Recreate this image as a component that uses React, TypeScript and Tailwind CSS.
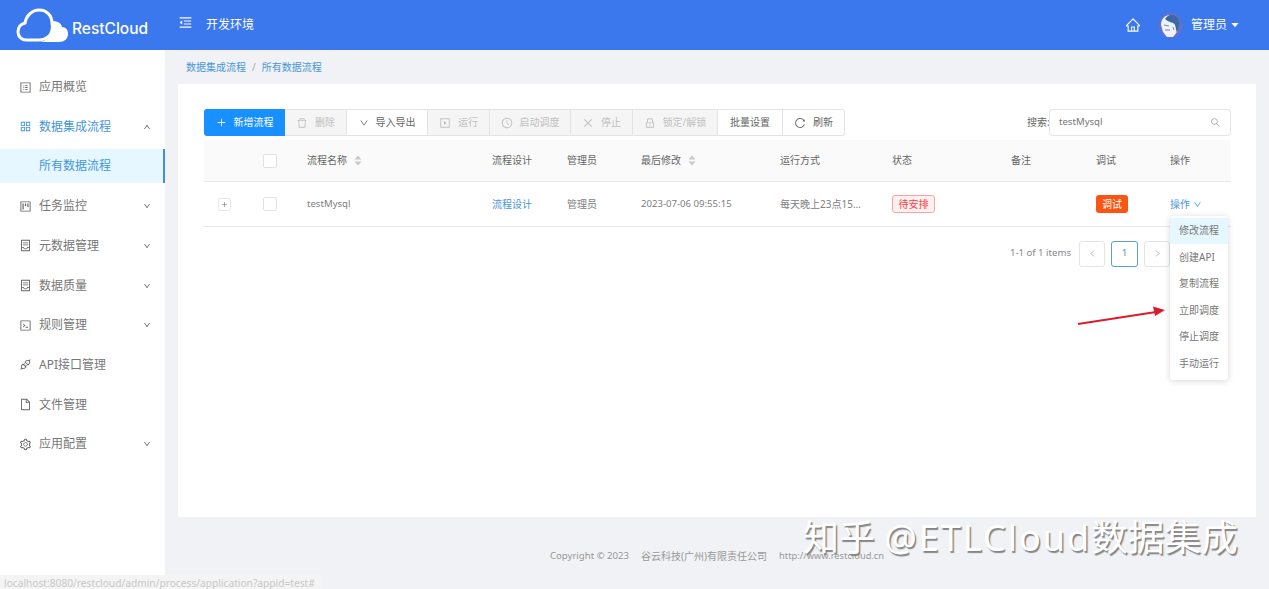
import type { ReactNode } from "react";
import {
  AiOutlineApi,
  AiOutlineAppstore,
  AiOutlineCaretDown,
  AiOutlineClockCircle,
  AiOutlineClose,
  AiOutlineCode,
  AiOutlineContainer,
  AiOutlineDelete,
  AiOutlineDown,
  AiOutlineFile,
  AiOutlineHome,
  AiOutlineLeft,
  AiOutlineLock,
  AiOutlineMenuFold,
  AiOutlinePlaySquare,
  AiOutlinePlus,
  AiOutlineProfile,
  AiOutlineProject,
  AiOutlineReload,
  AiOutlineRight,
  AiOutlineSearch,
  AiOutlineSetting,
  AiOutlineUp,
} from "react-icons/ai";

const menu = [
  { label: "任务监控", icon: <AiOutlineProject />, more: true },
  { label: "元数据管理", icon: <AiOutlineContainer />, more: true },
  { label: "数据质量", icon: <AiOutlineContainer />, more: true },
  { label: "规则管理", icon: <AiOutlineCode />, more: true },
  { label: "API接口管理", icon: <AiOutlineApi />, more: false },
  { label: "文件管理", icon: <AiOutlineFile />, more: false },
  { label: "应用配置", icon: <AiOutlineSetting />, more: true },
];

const dropdownItems = ["修改流程", "创建API", "复制流程", "立即调度", "停止调度", "手动运行"];

function Logo() {
  return (
    <svg width="52" height="35" viewBox="0 0 52 35" className="shrink-0">
      <path d="M34 14c5-2 11 0 12 5 4 0 6 3 6 7 0 5-4 8-9 8H24c5-1 9-4 10-9 1-4 0-8 0-11z" fill="#fff" />
      <path
        d="M10 32c-5 0-8-4-8-8 0-5 3-8 7-9 1-7 7-13 14-13 8 0 13 6 13 13 1 5 0 9-2 12-3 3-6 5-11 5z"
        fill="#3b78ee"
        stroke="#fff"
        strokeWidth="3"
      />
    </svg>
  );
}

function Avatar() {
  return (
    <svg width="23" height="25" viewBox="0 0 23 25" className="shrink-0">
      <ellipse cx="11.5" cy="12.5" rx="11.5" ry="12.5" fill="#6a6fc4" />
      <path d="M2 12c0-6 4-10 9-10 5 0 9 4 9 9l-2 8-4 5H8l-4-5z" fill="#eef3fb" />
      <path d="M6 6c2-3 5-5 8-4 5 1 7 6 6 11l-2 7c-1-2-1-5-2-8-1-3-6-2-10-6z" fill="#3a6aa6" />
      <path d="M5 12l5 1M6 17l5 0M14 14l1 3" stroke="#6f86ad" strokeWidth="1" />
    </svg>
  );
}

function SortCaret() {
  return (
    <svg width="8" height="11" viewBox="0 0 8 11" className="ml-[7px] shrink-0">
      <path d="M4 0.5L7.5 4.5H0.5z" fill="#c9c9c9" />
      <path d="M4 10.5L0.5 6.5H7.5z" fill="#c9c9c9" />
    </svg>
  );
}

function ToolButton({
  children,
  className,
  icon,
  disabled,
}: {
  children: ReactNode;
  className: string;
  icon?: ReactNode;
  disabled?: boolean;
}) {
  return (
    <div
      className={`flex h-full items-center justify-center gap-[7px] border border-l-0 border-[#e3e3e3] ${
        disabled ? "bg-[#f5f5f5] text-[#c0c0c0]" : "bg-white text-[#666]"
      } ${className}`}
    >
      {icon && <span className="text-[12px]">{icon}</span>}
      {children}
    </div>
  );
}

function Checkbox() {
  return <div className="h-[14px] w-[14px] rounded-[2px] border border-[#e2e2e2] bg-white" />;
}

function Sidebar() {
  return (
    <div className="w-[165px] shrink-0 bg-white pt-[17.5px] text-[12px] text-[#777]">
      <div className="flex h-[39.6px] items-center pl-[19px]">
        <AiOutlineProfile className="mr-[7px] text-[13px] text-[#666]" />
        应用概览
      </div>
      <div className="flex h-[39.6px] items-center pl-[19px] text-[#3f96dc]">
        <AiOutlineAppstore className="mr-[7px] text-[13px]" />
        数据集成流程
        <AiOutlineUp className="ml-auto mr-[14px] text-[8px] text-[#555]" />
      </div>
      <div className="flex h-[39.6px] items-center">
        <div className="flex h-[34px] w-full items-center border-r-[2px] border-[#3f8fd8] bg-[#e6f7ff] pl-[39px] text-[#3f96dc]">
          所有数据流程
        </div>
      </div>
      {menu.map((item) => (
        <div key={item.label} className="flex h-[39.7px] items-center pl-[19px]">
          <span className="mr-[7px] text-[13px] text-[#666]">{item.icon}</span>
          {item.label}
          {item.more && <AiOutlineDown className="ml-auto mr-[14px] text-[8px] text-[#555]" />}
        </div>
      ))}
    </div>
  );
}

function Toolbar() {
  return (
    <div className="flex h-[27px] items-center text-[10px]">
      <div className="flex h-full w-[81px] items-center justify-center gap-[7px] rounded-l-[3px] bg-[#1890ff] text-white">
        <AiOutlinePlus className="text-[11px]" />
        新增流程
      </div>
      <ToolButton className="w-[62px]" disabled icon={<AiOutlineDelete />}>
        删除
      </ToolButton>
      <ToolButton className="w-[81px]" icon={<AiOutlineDown className="text-[10px]" />}>
        导入导出
      </ToolButton>
      <ToolButton className="w-[62px]" disabled icon={<AiOutlinePlaySquare />}>
        运行
      </ToolButton>
      <ToolButton className="w-[81px]" disabled icon={<AiOutlineClockCircle />}>
        启动调度
      </ToolButton>
      <ToolButton className="w-[62px]" disabled icon={<AiOutlineClose />}>
        停止
      </ToolButton>
      <ToolButton className="w-[85px]" disabled icon={<AiOutlineLock />}>
        锁定/解锁
      </ToolButton>
      <ToolButton className="w-[65px]">批量设置</ToolButton>
      <ToolButton className="w-[62px] rounded-r-[3px]" icon={<AiOutlineReload />}>
        刷新
      </ToolButton>
      <div className="ml-auto flex h-full items-center text-[#666]">
        <span className="w-[22px] whitespace-nowrap">搜索:</span>
        <div className="flex h-full w-[182px] items-center justify-between rounded-[3px] border border-[#e6e6e6] px-[9px] text-[9.6px] text-[#777]">
          testMysql
          <AiOutlineSearch className="text-[11px] text-[#aaa]" />
        </div>
      </div>
    </div>
  );
}

const gridCols = "grid grid-cols-[59px_44px_185px_75px_74px_139px_112px_119px_85px_74px_61px] items-center";

function Table() {
  return (
    <div className="mt-[4px] text-[10px]">
      <div className={`${gridCols} h-[42px] border-b border-[#e8e8e8] bg-[#fafafa] text-[#666]`}>
        <div />
        <Checkbox />
        <div className="flex items-center">
          流程名称
          <SortCaret />
        </div>
        <div>流程设计</div>
        <div>管理员</div>
        <div className="flex items-center">
          最后修改
          <SortCaret />
        </div>
        <div>运行方式</div>
        <div>状态</div>
        <div>备注</div>
        <div>调试</div>
        <div>操作</div>
      </div>
      <div className={`${gridCols} h-[45px] border-b border-[#e8e8e8] text-[#808080]`}>
        <div className="pl-[14px]">
          <div className="flex h-[13px] w-[13px] items-center justify-center rounded-[2px] border border-[#e8e8e8] text-[7px] text-[#666]">
            <AiOutlinePlus />
          </div>
        </div>
        <Checkbox />
        <div className="pt-px text-[9.6px]">testMysql</div>
        <div className="text-[#4a96d8]">流程设计</div>
        <div>管理员</div>
        <div className="whitespace-nowrap pt-px text-[9.6px]">2023-07-06 09:55:15</div>
        <div className="whitespace-nowrap">每天晚上23点15...</div>
        <div>
          <span className="inline-flex h-[18px] w-[43px] items-center justify-center rounded-[3px] border border-[#ffa39e] bg-[#fff1f0] text-[#f5424d]">
            待安排
          </span>
        </div>
        <div />
        <div>
          <span className="inline-flex h-[18px] w-[32px] items-center justify-center rounded-[3px] bg-[#fa5512] text-white">
            调试
          </span>
        </div>
        <div className="flex items-center gap-[3px] text-[#4a96d8]">
          操作
          <AiOutlineDown className="text-[9px]" />
        </div>
      </div>
    </div>
  );
}

function Pagination() {
  return (
    <div className="mt-[13px] flex h-[27px] items-center justify-end pr-[61px] text-[9.6px] text-[#888]">
      <span className="mr-[8px] whitespace-nowrap">1-1 of 1 items</span>
      <div className="flex h-[26px] w-[26px] items-center justify-center rounded-[3px] border border-[#e4e4e4] text-[#bbb]">
        <AiOutlineLeft className="text-[9px]" />
      </div>
      <div className="ml-[6px] flex h-[26px] w-[27px] items-center justify-center rounded-[3px] border border-[#5a9fd8] text-[#4a96d8]">
        1
      </div>
      <div className="ml-[6px] flex h-[26px] w-[26px] items-center justify-center rounded-[3px] border border-[#e4e4e4] text-[#bbb]">
        <AiOutlineRight className="text-[9px]" />
      </div>
    </div>
  );
}

export default function App() {
  return (
    <div className="relative h-[589px] w-[1269px] overflow-hidden bg-[#f0f2f5] font-['Noto_Sans','Noto_Sans_CJK_SC',sans-serif]">
      <div className="flex h-[50px] items-center bg-[#3b78ee] text-white">
        <div className="ml-[16px] flex w-[162px] items-center">
          <Logo />
          <span className="ml-[4px] mt-[8px] whitespace-nowrap font-['Inter',sans-serif] text-[15.5px] font-medium">RestCloud</span>
        </div>
        <AiOutlineMenuFold className="mt-[-5px] text-[15px]" />
        <span className="ml-[13px] text-[12px]">开发环境</span>
        <div className="ml-auto mr-[29px] flex items-center text-[12px]">
          <AiOutlineHome className="mr-[18px] text-[16px]" />
          <Avatar />
          <span className="ml-[9px]">管理员</span>
          <AiOutlineCaretDown className="ml-[3px] text-[10px]" />
        </div>
      </div>

      <div className="flex h-[539px]">
        <Sidebar />
        <div className="flex min-w-0 flex-1 flex-col">
          <div className="flex h-[34px] items-center gap-[6px] pl-[21px] text-[10px] text-[#4a96d8]">
            <span>数据集成流程</span>
            <span className="text-[#aaa]">/</span>
            <span>所有数据流程</span>
          </div>
          <div className="mx-[13px] h-[433px] bg-white pl-[26px] pr-[25px] pt-[25px]">
            <Toolbar />
            <Table />
            <Pagination />
          </div>
          <div className="mt-[32px] flex justify-center gap-[12px] text-[10px] text-[#999]">
            <span className="text-[9.6px]">Copyright © 2023</span>
            <span>谷云科技(广州)有限责任公司</span>
            <span className="text-[9.3px]">http://www.restcloud.cn</span>
          </div>
        </div>
      </div>

      {/* action menu */}
      <div className="absolute left-[1170px] top-[216px] h-[164px] w-[58px] rounded-[3px] bg-white py-[1.5px] text-[10px] text-[#777] shadow-[0_1px_6px_rgba(0,0,0,0.16)]">
        {dropdownItems.map((item, i) => (
          <div key={item} className={`flex h-[26.5px] items-center pl-[9px] ${i === 0 ? "bg-[#e6f7ff]" : ""}`}>
            {item}
          </div>
        ))}
      </div>

      {/* red arrow annotation */}
      <svg className="absolute left-[1070px] top-[300px]" width="100" height="30" viewBox="0 0 100 30">
        <path d="M8 24L86 12" stroke="#d81e2c" strokeWidth="2" />
        <path d="M95 10L83 6.5L85 16z" fill="#d81e2c" />
      </svg>

      <div className="absolute left-[803px] top-[512px] whitespace-nowrap text-[36px] leading-[50px] text-white [text-shadow:1.5px_1.5px_1px_#858585]">
        知乎 <span className="tracking-[2px]">@ETLCloud</span>
        <span className="text-[36.7px]">数据集成</span>
      </div>

      <div className="absolute bottom-0 left-0 h-[14px] w-[322px] overflow-hidden whitespace-nowrap bg-[#f4f4f5] pl-[4px] text-[10.2px] leading-[17px] text-[#c8c8c8]">
        localhost:8080/restcloud/admin/process/application?appid=test#
      </div>
    </div>
  );
}
